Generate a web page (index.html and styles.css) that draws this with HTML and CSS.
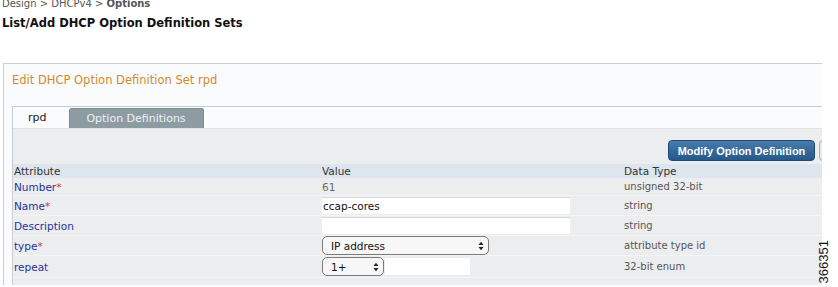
FILE: index.html
```html
<!DOCTYPE html>
<html>
<head>
<meta charset="utf-8">
<link rel="stylesheet" href="styles.css">
</head>
<body>
<div class="crumb">Design &gt; DHCPv4 &gt; <b>Options</b></div>
<div class="title">List/Add DHCP Option Definition Sets</div>
<div class="panel">
  <div class="panel-head">Edit DHCP Option Definition Set rpd</div>
  <div class="tabbox">
    <div class="tabs">
      <span class="tab">rpd</span>
      <span class="tab active">Option Definitions</span>
    </div>
    <div class="content">
      <div class="toolbar">
        <button class="btn primary">Modify Option Definition</button>
        <button class="btn plain" aria-label="Delete">&nbsp;</button>
      </div>
      <table class="grid">
        <colgroup><col class="c1"><col class="c2"><col class="c3"></colgroup>
        <tr class="head"><td>Attribute</td><td>Value</td><td>Data Type</td></tr>
        <tr class="r1"><td class="lbl">Number<span class="req">*</span></td><td class="muted">61</td><td class="dt">unsigned 32-bit</td></tr>
        <tr class="r2"><td class="lbl">Name<span class="req">*</span></td><td><div class="field wide">ccap-cores</div></td><td class="dt">string</td></tr>
        <tr class="r3"><td class="lbl">Description</td><td><div class="field wide"></div></td><td class="dt">string</td></tr>
        <tr class="r4"><td class="lbl">type<span class="req">*</span></td><td><div class="sel sel-type"><span>IP address</span><svg width="6" height="10" viewBox="0 0 6 10"><path d="M0.5 4 L3 0.8 L5.5 4 Z M0.5 6 L3 9.2 L5.5 6 Z" fill="#222"/></svg></div></td><td class="dt">attribute type id</td></tr>
        <tr class="r5"><td class="lbl">repeat</td><td><div class="pair"><div class="sel sel-rep"><span>1+</span><svg width="6" height="10" viewBox="0 0 6 10"><path d="M0.5 4 L3 0.8 L5.5 4 Z M0.5 6 L3 9.2 L5.5 6 Z" fill="#222"/></svg></div><div class="field small"></div></div></td><td class="dt">32-bit enum</td></tr>
      </table>
    </div>
  </div>
</div>
<div class="fignum">366351</div>
</body>
</html>
```
FILE: styles.css
```css
html, body {
  margin: 0;
  padding: 0;
  background: #ffffff;
}
body {
  font-family: "DejaVu Sans", Verdana, sans-serif;
  font-size: 10.5px;
  color: #222;
  width: 838px;
  height: 287px;
  overflow: hidden;
  position: relative;
}
.crumb {
  margin-top: -2px;
  padding-left: 2px;
  height: 12px;
  line-height: 12px;
  color: #555;
  font-size: 10px;
}
.crumb b {
  color: #555;
}
.title {
  padding-left: 2px;
  margin-top: 5px;
  height: 16px;
  line-height: 16px;
  font-weight: bold;
  font-size: 11.5px;
  color: #111;
}
.panel {
  margin: 32px 0 0 3px;
  width: 818px;
  border-top: 1px solid #c9d0d4;
  border-left: 1px solid #c9d0d4;
  background: #fafbfc;
  height: 221px;
}
.panel-head {
  height: 42px;
  line-height: 33px;
  padding-left: 8px;
  color: #d28a2c;
  font-size: 11.5px;
}
.tabbox {
  margin-left: 8px;
  border-top: 1px solid #c5cdd1;
  border-left: 1px solid #c5cdd1;
  height: 178px;
}
.tabs {
  display: flex;
  align-items: flex-end;
  height: 21px;
  padding-left: 15px;
  gap: 22px;
  border-bottom: 1px solid #dfe3e5;
  font-size: 11px;
}
.tab {
  height: 20px;
  line-height: 20px;
  color: #222;
}
.tab.active {
  width: 135px;
  text-align: center;
  background: #8d9ca3;
  color: #eef2f4;
  border-radius: 3px 3px 0 0;
  border: 1px solid #7e8d94;
  border-bottom: none;
  box-sizing: border-box;
}
.content {
  background: #ecedef;
  height: 156px;
  overflow: hidden;
}
.toolbar {
  display: flex;
  gap: 4px;
  padding: 11px 0 0 655px;
  height: 24px;
  white-space: nowrap;
}
.btn {
  height: 21px;
  border-radius: 4px;
  padding: 0 8px;
  flex: none;
}
.btn.primary {
  width: 147px;
  background: linear-gradient(#477cae, #265889);
  border: 1px solid #1d4a76;
  color: #ffffff;
  font-family: "Liberation Sans", Arial, sans-serif;
  font-weight: bold;
  font-size: 11px;
}
.btn.plain {
  width: 60px;
  background: #e8eaeb;
  border: 1px solid #a9b0b4;
}
.grid {
  border-collapse: collapse;
  width: 810px;
}
.grid col.c1 { width: 308px; }
.grid col.c2 { width: 302px; }
.grid td {
  padding: 0 0 0 1px;
  vertical-align: middle;
  white-space: nowrap;
}
.grid tr.head td {
  background: #dde6ee;
  height: 14px;
  line-height: 14px;
  color: #333;
}
.grid tr.r1 td { height: 17px; border-bottom: 1px solid #f3f4f5; }
.grid tr.r2 td { height: 19px; border-bottom: 1px solid #f3f4f5; }
.grid tr.r3 td { height: 19px; border-bottom: 1px solid #f3f4f5; }
.grid tr.r4 td { height: 19px; border-bottom: 1px solid #f3f4f5; }
.grid tr.r5 td { height: 21px; border-bottom: 1px solid #f3f4f5; }
.lbl {
  color: #1e3498;
}
.req {
  color: #d9363a;
}
.muted {
  color: #6a6a6a;
}
.dt {
  color: #555;
  font-size: 10px;
}
.field {
  background: #ffffff;
  border-top: 1px solid #d6d8da;
  height: 17px;
  line-height: 16px;
  padding-left: 1px;
  color: #111;
  box-sizing: border-box;
}
.field.wide { width: 248px; }
.field.small { width: 85px; border-top: none; }
.sel {
  display: flex;
  align-items: center;
  justify-content: space-between;
  box-sizing: border-box;
  height: 19px;
  border: 1px solid #7a7a7a;
  border-radius: 5px;
  background: #f7f7f7;
  padding: 0 4px 0 8px;
  color: #111;
}
.sel-type { width: 167px; }
.sel-rep { width: 62px; }
.pair {
  display: flex;
  align-items: center;
  gap: 1px;
}
.fignum {
  position: absolute;
  left: 817px;
  top: 240px;
  writing-mode: vertical-rl;
  transform: rotate(180deg);
  font-family: "Liberation Sans", Arial, sans-serif;
  font-size: 13px;
  line-height: 13px;
  color: #111;
}
```
